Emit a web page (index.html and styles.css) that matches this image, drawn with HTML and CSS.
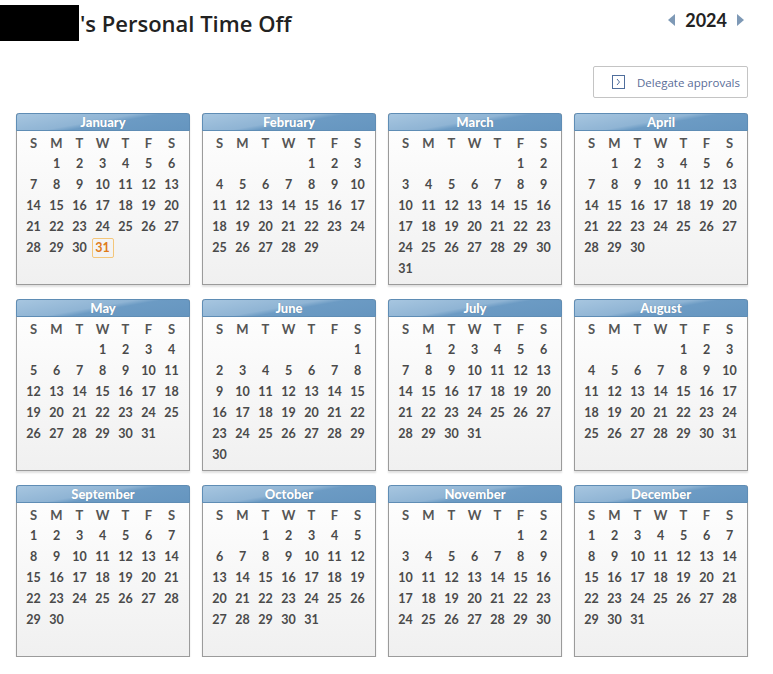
FILE: index.html
```html
<!DOCTYPE html>
<html>
<head>
<meta charset="utf-8">
<link rel="stylesheet" href="styles.css">
</head>
<body>
<div class="page">
  <header class="top">
    <h1 class="title"><span class="redact"></span>'s Personal Time Off</h1>
    <div class="year-nav">
      <span class="arrow left"></span>
      <span class="year">2024</span>
      <span class="arrow right"></span>
    </div>
  </header>
  <div class="actions">
    <button class="delegate">
      <svg class="dicon" width="13" height="14" viewBox="0 0 13 14"><rect x="0.5" y="0.5" width="12" height="13" fill="none" stroke="#4f6e9c"/><path d="M5 4 L7.5 7 L5 10" fill="none" stroke="#4f6e9c" stroke-width="1"/></svg>
      <span>Delegate approvals</span>
    </button>
  </div>
  <div class="months">
    <section class="month"><h2>January</h2><div class="grid"><b>S</b><b>M</b><b>T</b><b>W</b><b>T</b><b>F</b><b>S</b>
      <span class="o1">1</span><span>2</span><span>3</span><span>4</span><span>5</span><span>6</span><span>7</span><span>8</span><span>9</span><span>10</span><span>11</span><span>12</span><span>13</span><span>14</span><span>15</span><span>16</span><span>17</span><span>18</span><span>19</span><span>20</span><span>21</span><span>22</span><span>23</span><span>24</span><span>25</span><span>26</span><span>27</span><span>28</span><span>29</span><span>30</span><span class="today">31</span></div></section>
    <section class="month"><h2>February</h2><div class="grid"><b>S</b><b>M</b><b>T</b><b>W</b><b>T</b><b>F</b><b>S</b>
      <span class="o4">1</span><span>2</span><span>3</span><span>4</span><span>5</span><span>6</span><span>7</span><span>8</span><span>9</span><span>10</span><span>11</span><span>12</span><span>13</span><span>14</span><span>15</span><span>16</span><span>17</span><span>18</span><span>19</span><span>20</span><span>21</span><span>22</span><span>23</span><span>24</span><span>25</span><span>26</span><span>27</span><span>28</span><span>29</span></div></section>
    <section class="month"><h2>March</h2><div class="grid"><b>S</b><b>M</b><b>T</b><b>W</b><b>T</b><b>F</b><b>S</b>
      <span class="o5">1</span><span>2</span><span>3</span><span>4</span><span>5</span><span>6</span><span>7</span><span>8</span><span>9</span><span>10</span><span>11</span><span>12</span><span>13</span><span>14</span><span>15</span><span>16</span><span>17</span><span>18</span><span>19</span><span>20</span><span>21</span><span>22</span><span>23</span><span>24</span><span>25</span><span>26</span><span>27</span><span>28</span><span>29</span><span>30</span><span>31</span></div></section>
    <section class="month"><h2>April</h2><div class="grid"><b>S</b><b>M</b><b>T</b><b>W</b><b>T</b><b>F</b><b>S</b>
      <span class="o1">1</span><span>2</span><span>3</span><span>4</span><span>5</span><span>6</span><span>7</span><span>8</span><span>9</span><span>10</span><span>11</span><span>12</span><span>13</span><span>14</span><span>15</span><span>16</span><span>17</span><span>18</span><span>19</span><span>20</span><span>21</span><span>22</span><span>23</span><span>24</span><span>25</span><span>26</span><span>27</span><span>28</span><span>29</span><span>30</span></div></section>
    <section class="month"><h2>May</h2><div class="grid"><b>S</b><b>M</b><b>T</b><b>W</b><b>T</b><b>F</b><b>S</b>
      <span class="o3">1</span><span>2</span><span>3</span><span>4</span><span>5</span><span>6</span><span>7</span><span>8</span><span>9</span><span>10</span><span>11</span><span>12</span><span>13</span><span>14</span><span>15</span><span>16</span><span>17</span><span>18</span><span>19</span><span>20</span><span>21</span><span>22</span><span>23</span><span>24</span><span>25</span><span>26</span><span>27</span><span>28</span><span>29</span><span>30</span><span>31</span></div></section>
    <section class="month"><h2>June</h2><div class="grid"><b>S</b><b>M</b><b>T</b><b>W</b><b>T</b><b>F</b><b>S</b>
      <span class="o6">1</span><span>2</span><span>3</span><span>4</span><span>5</span><span>6</span><span>7</span><span>8</span><span>9</span><span>10</span><span>11</span><span>12</span><span>13</span><span>14</span><span>15</span><span>16</span><span>17</span><span>18</span><span>19</span><span>20</span><span>21</span><span>22</span><span>23</span><span>24</span><span>25</span><span>26</span><span>27</span><span>28</span><span>29</span><span>30</span></div></section>
    <section class="month"><h2>July</h2><div class="grid"><b>S</b><b>M</b><b>T</b><b>W</b><b>T</b><b>F</b><b>S</b>
      <span class="o1">1</span><span>2</span><span>3</span><span>4</span><span>5</span><span>6</span><span>7</span><span>8</span><span>9</span><span>10</span><span>11</span><span>12</span><span>13</span><span>14</span><span>15</span><span>16</span><span>17</span><span>18</span><span>19</span><span>20</span><span>21</span><span>22</span><span>23</span><span>24</span><span>25</span><span>26</span><span>27</span><span>28</span><span>29</span><span>30</span><span>31</span></div></section>
    <section class="month"><h2>August</h2><div class="grid"><b>S</b><b>M</b><b>T</b><b>W</b><b>T</b><b>F</b><b>S</b>
      <span class="o4">1</span><span>2</span><span>3</span><span>4</span><span>5</span><span>6</span><span>7</span><span>8</span><span>9</span><span>10</span><span>11</span><span>12</span><span>13</span><span>14</span><span>15</span><span>16</span><span>17</span><span>18</span><span>19</span><span>20</span><span>21</span><span>22</span><span>23</span><span>24</span><span>25</span><span>26</span><span>27</span><span>28</span><span>29</span><span>30</span><span>31</span></div></section>
    <section class="month"><h2>September</h2><div class="grid"><b>S</b><b>M</b><b>T</b><b>W</b><b>T</b><b>F</b><b>S</b>
      <span>1</span><span>2</span><span>3</span><span>4</span><span>5</span><span>6</span><span>7</span><span>8</span><span>9</span><span>10</span><span>11</span><span>12</span><span>13</span><span>14</span><span>15</span><span>16</span><span>17</span><span>18</span><span>19</span><span>20</span><span>21</span><span>22</span><span>23</span><span>24</span><span>25</span><span>26</span><span>27</span><span>28</span><span>29</span><span>30</span></div></section>
    <section class="month"><h2>October</h2><div class="grid"><b>S</b><b>M</b><b>T</b><b>W</b><b>T</b><b>F</b><b>S</b>
      <span class="o2">1</span><span>2</span><span>3</span><span>4</span><span>5</span><span>6</span><span>7</span><span>8</span><span>9</span><span>10</span><span>11</span><span>12</span><span>13</span><span>14</span><span>15</span><span>16</span><span>17</span><span>18</span><span>19</span><span>20</span><span>21</span><span>22</span><span>23</span><span>24</span><span>25</span><span>26</span><span>27</span><span>28</span><span>29</span><span>30</span><span>31</span></div></section>
    <section class="month"><h2>November</h2><div class="grid"><b>S</b><b>M</b><b>T</b><b>W</b><b>T</b><b>F</b><b>S</b>
      <span class="o5">1</span><span>2</span><span>3</span><span>4</span><span>5</span><span>6</span><span>7</span><span>8</span><span>9</span><span>10</span><span>11</span><span>12</span><span>13</span><span>14</span><span>15</span><span>16</span><span>17</span><span>18</span><span>19</span><span>20</span><span>21</span><span>22</span><span>23</span><span>24</span><span>25</span><span>26</span><span>27</span><span>28</span><span>29</span><span>30</span></div></section>
    <section class="month"><h2>December</h2><div class="grid"><b>S</b><b>M</b><b>T</b><b>W</b><b>T</b><b>F</b><b>S</b>
      <span>1</span><span>2</span><span>3</span><span>4</span><span>5</span><span>6</span><span>7</span><span>8</span><span>9</span><span>10</span><span>11</span><span>12</span><span>13</span><span>14</span><span>15</span><span>16</span><span>17</span><span>18</span><span>19</span><span>20</span><span>21</span><span>22</span><span>23</span><span>24</span><span>25</span><span>26</span><span>27</span><span>28</span><span>29</span><span>30</span><span>31</span></div></section>
  </div>
</div>
</body>
</html>
```
FILE: styles.css
```css
* { box-sizing: border-box; }
html, body { margin: 0; padding: 0; background: #fff; }
body { font-family: Lato, "Open Sans", Arial, sans-serif; color: #333; }
.page { width: 773px; padding: 0 26px 0 0; }
.top { display: flex; justify-content: space-between; align-items: center; height: 52px; }
.title { margin: 0; display: flex; align-items: center; font-family: "Open Sans", Lato, sans-serif; font-size: 22px; font-weight: 600; color: #222; height: 46px; margin-bottom: 6px; }
.redact { display: inline-block; width: 79px; height: 36px; background: #000; margin-top: 0; margin-right: 1px; }
.year-nav { display: flex; align-items: center; gap: 10px; margin-top: -12px; margin-right: 3px; }
.year { font-size: 18px; font-weight: 700; color: #222; }
.arrow { width: 0; height: 0; border-top: 6px solid transparent; border-bottom: 6px solid transparent; }
.arrow.left { border-right: 7px solid #7e99b6; }
.arrow.right { border-left: 7px solid #7e99b6; }
.actions { display: flex; justify-content: flex-end; margin-top: 14px; }
.delegate { display: flex; align-items: center; gap: 12px; width: 155px; height: 32px; padding: 0 0 0 18px; border: 1px solid #c4c4c4; border-radius: 2px; background: #fff; font-family: "Open Sans", Lato, sans-serif; font-size: 11.5px; color: #5a6d98; cursor: pointer; margin-right: -1px; }
.dicon { flex: none; }
.months { display: grid; grid-template-columns: repeat(4, 174px); column-gap: 12px; row-gap: 14px; margin: 15px 0 0 16px; }
.month { height: 172px; border: 1px solid #9b9b9b; border-top: none; border-radius: 3px 3px 0 0; background: linear-gradient(#ffffff, #f0f0f0); box-shadow: 0 2px 2px rgba(0,0,0,0.12); }
.month h2 { margin: 0 -1px; height: 18px; line-height: 17px; text-align: center; font-size: 13px; font-weight: 900; color: #fff; border: 1px solid #5f8db5; border-radius: 3px 3px 0 0; background: linear-gradient(170deg, #a7c6e0 0%, #8fb4d4 45%, #6c9bc4 55%, #6595bf 100%); text-shadow: 0 0 1px rgba(0,0,0,0.2); }
.grid { display: grid; grid-template-columns: repeat(7, 23px); grid-auto-rows: 21px; padding: 1px 0 0 5px; align-items: center; justify-items: center; }
.grid b, .grid span { font-size: 12.5px; font-weight: 700; color: #4a4a4a; text-align: center; }
.grid b { font-size: 13px; color: #555; }
.grid span { width: 22px; height: 20px; line-height: 20px; }
.grid .today { border: 1px solid #f4c67a; border-radius: 2px; color: #e07b1a; line-height: 18px; }
.o1 { grid-column-start: 2; }
.o2 { grid-column-start: 3; }
.o3 { grid-column-start: 4; }
.o4 { grid-column-start: 5; }
.o5 { grid-column-start: 6; }
.o6 { grid-column-start: 7; }
```
